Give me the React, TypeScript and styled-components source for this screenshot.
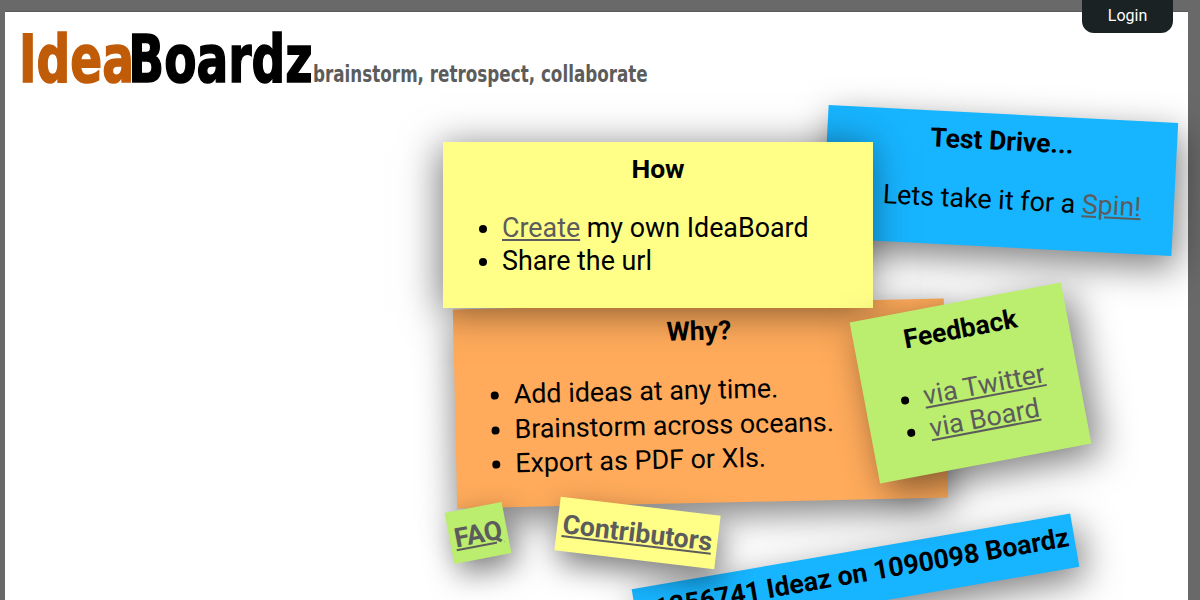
import React from "react";
import styled, { createGlobalStyle } from "styled-components";

const GlobalStyle = createGlobalStyle`
  html, body {
    margin: 0;
    padding: 0;
    height: 100%;
    overflow: hidden;
    background: #696969;
    font-family: Roboto, "Liberation Sans", sans-serif;
  }
`;

type NoteSpec = {
  $x: number;
  $y: number;
  $w: number;
  $h: number;
  $angle: number;
  $bg: string;
  $z: number;
  $shadow: string;
};

const App = () => {
  return (
    <Frame>
      <GlobalStyle />
      <Page>
        <LoginTab>Login</LoginTab>
        <Header>
          <Logo>
            <LogoIdea>Idea</LogoIdea>
            <LogoBoardz>Boardz</LogoBoardz>
          </Logo>
          <Tagline>brainstorm, retrospect, collaborate</Tagline>
        </Header>
        <Board>
          <Note
            $x={820}
            $y={101.5}
            $w={350}
            $h={133}
            $angle={2.95}
            $bg="#17b4ff"
            $z={1}
            $shadow="5px 12px 36px rgba(0,0,0,.5)"
          >
            <NoteTitle>Test Drive...</NoteTitle>
            <NoteText>
              Lets take it for a <NoteLink href="#">Spin!</NoteLink>
            </NoteText>
          </Note>
          <Note
            $x={438}
            $y={130}
            $w={430}
            $h={166}
            $angle={0}
            $bg="#ffff88"
            $z={3}
            $shadow="-4px 4px 36px rgba(0,0,0,.5)"
          >
            <NoteTitle>How</NoteTitle>
            <NoteList>
              <li>
                <NoteLink href="#">Create</NoteLink> my own IdeaBoard
              </li>
              <li>Share the url</li>
            </NoteList>
          </Note>
          <Note
            $x={449.5}
            $y={292}
            $w={491}
            $h={199}
            $angle={-1.28}
            $bg="#ffab5b"
            $z={2}
            $shadow="0 12px 36px rgba(0,0,0,.5)"
          >
            <NoteTitle>Why?</NoteTitle>
            <NoteList $lineHeight={34.5} $gap={26}>
              <li>Add ideas at any time.</li>
              <li>Brainstorm across oceans.</li>
              <li>Export as PDF or Xls.</li>
            </NoteList>
          </Note>
          <Note
            $x={858}
            $y={289}
            $w={215}
            $h={164}
            $angle={-10.7}
            $bg="#bbed6e"
            $z={4}
            $shadow="8px 12px 36px rgba(0,0,0,.5)"
          >
            <NoteTitle>Feedback</NoteTitle>
            <NoteList>
              <li>
                <NoteLink href="#">via Twitter</NoteLink>
              </li>
              <li>
                <NoteLink href="#">via Board</NoteLink>
              </li>
            </NoteList>
          </Note>
          <Note
            $x={444}
            $y={495}
            $w={58}
            $h={52}
            $angle={-10.9}
            $bg="#bbed6e"
            $z={4}
            $shadow="4px 12px 30px rgba(0,0,0,.5)"
          >
            <SmallLink href="#">FAQ</SmallLink>
          </Note>
          <Note
            $x={551.5}
            $y={494}
            $w={161}
            $h={54}
            $angle={6.8}
            $bg="#ffff88"
            $z={4}
            $shadow="4px 12px 30px rgba(0,0,0,.5)"
          >
            <SmallLink href="#">Contributors</SmallLink>
          </Note>
          <Note
            $x={628}
            $y={538.5}
            $w={445}
            $h={54}
            $angle={-9.8}
            $bg="#17b4ff"
            $z={1}
            $shadow="5px 12px 36px rgba(0,0,0,.5)"
          >
            <StatsText>1256741 Ideaz on 1090098 Boardz</StatsText>
          </Note>
        </Board>
      </Page>
    </Frame>
  );
};

const Frame = styled.div`
  width: 1200px;
  height: 600px;
  box-sizing: border-box;
  padding: 11px 12px 0 5px;
  overflow: hidden;
`;

const Page = styled.div`
  position: relative;
  width: 100%;
  height: 589px;
  background: #ffffff;
  border-top: 1px solid #5a5a5a;
  box-sizing: border-box;
`;

const LoginTab = styled.div`
  position: absolute;
  top: -12px;
  right: 15px;
  width: 91px;
  height: 33px;
  padding-top: 4px;
  box-sizing: border-box;
  background: #1a2224;
  border-radius: 0 0 12px 12px;
  color: #ffffff;
  font-size: 16px;
  line-height: 24px;
  text-align: center;
`;

const Header = styled.header`
  display: flex;
  align-items: baseline;
  padding: 8px 0 0 14px;
`;

const Logo = styled.div`
  flex: none;
  width: 294px;
  font-family: "DejaVu Sans", sans-serif;
  font-weight: 700;
  font-stretch: condensed;
  font-size: 65px;
  line-height: 80px;
  white-space: nowrap;
  -webkit-text-stroke: 1.5px currentColor;
  transform: scaleX(0.805);
  transform-origin: left center;
`;

const LogoIdea = styled.span`
  color: #c05b08;
`;

const LogoBoardz = styled.span`
  color: #000000;
  margin-left: -7px;
`;

const Tagline = styled.div`
  font-family: "DejaVu Sans", sans-serif;
  font-weight: 700;
  font-stretch: condensed;
  font-size: 23px;
  color: #5c5c5c;
  white-space: nowrap;
  transform: scaleX(0.811);
  transform-origin: left center;
`;

const Board = styled.main`
  position: absolute;
  inset: 0;
  pointer-events: none;
`;

const Note = styled.section<NoteSpec>`
  position: absolute;
  left: ${(p) => p.$x}px;
  top: ${(p) => p.$y}px;
  width: ${(p) => p.$w}px;
  height: ${(p) => p.$h}px;
  z-index: ${(p) => p.$z};
  transform: rotate(${(p) => p.$angle}deg);
  background: ${(p) => p.$bg};
  box-shadow: ${(p) => p.$shadow};
  box-sizing: border-box;
  text-align: center;
  color: #000000;
  padding-top: 11px;
`;

const NoteTitle = styled.h3`
  margin: 0;
  font-size: 26.5px;
  line-height: 32px;
  font-weight: 700;
`;

const NoteText = styled.p`
  margin: 27px 0 0;
  padding-left: 26px;
  font-size: 26.85px;
  line-height: 32px;
`;

const NoteList = styled.ul<{ $lineHeight?: number; $gap?: number }>`
  margin: ${(p) => p.$gap ?? 27}px 0 0;
  padding: 0 0 0 59px;
  text-align: left;
  font-size: 26.85px;
  line-height: ${(p) => p.$lineHeight ?? 33}px;
`;

const NoteLink = styled.a`
  color: #5c5c5c;
  text-decoration: underline;
`;

const SmallLink = styled.a`
  color: #5c5c5c;
  font-size: 26.67px;
  font-weight: 700;
  text-decoration: underline;
  line-height: 32px;
`;

const StatsText = styled.div`
  margin-top: -4px;
  padding-left: 14px;
  font-size: 26.67px;
  font-weight: 700;
  line-height: 32px;
  white-space: nowrap;
`;

export default App;
